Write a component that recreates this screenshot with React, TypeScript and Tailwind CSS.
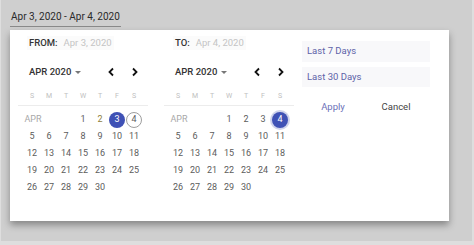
import React from "react";

const font = { fontFamily: "Roboto, 'Liberation Sans', sans-serif" };

function Chevron({ dir }: { dir: "l" | "r" }) {
  return (
    <svg width="8" height="10" viewBox="0 0 8 10">
      {dir === "l" ? (
        <polyline points="6,1.5 2.5,5 6,8.5" fill="none" stroke="#111" strokeWidth="1.8" />
      ) : (
        <polyline points="2,1.5 5.5,5 2,8.5" fill="none" stroke="#111" strokeWidth="1.8" />
      )}
    </svg>
  );
}

type DayState = "none" | "sel" | "outline" | "today" | "selHalo";

function Calendar({
  label,
  value,
  states,
}: {
  label: string;
  value: string;
  states: Record<number, DayState>;
}) {
  const cells: (number | null)[] = [null, null, null];
  for (let d = 1; d <= 30; d++) cells.push(d);
  return (
    <div className="w-[130px] flex flex-col">
      <div className="h-[14px] mt-[6px] flex items-center">
        <div className="ml-[9px] px-[2px] h-[14px] flex items-center bg-[#fbfbfb] whitespace-nowrap">
          <span className="text-[9.5px] font-medium text-[#333]">{label}</span>
          <span className="text-[9.5px] text-[#c4c4c4] ml-[6px]">{value}</span>
        </div>
      </div>
      <div className="h-[14px] mt-[15px] flex items-center pl-[11px]">
        <span className="text-[9.5px] font-medium text-[#333]">APR 2020</span>
        <span className="ml-[4px] w-0 h-0 border-l-[3px] border-r-[3px] border-t-[3px] border-l-transparent border-r-transparent border-t-[#777]" />
        <div className="ml-[26px] flex items-center">
          <Chevron dir="l" />
          <span className="w-[16px]" />
          <Chevron dir="r" />
        </div>
      </div>
      <div className="mt-[12px] pl-[5.5px] grid grid-cols-[repeat(7,17px)] h-[10px] items-center">
        {["S", "M", "T", "W", "T", "F", "S"].map((d, i) => (
          <span key={i} className="text-[7px] text-[#c0c0c0] text-center">
            {d}
          </span>
        ))}
      </div>
      <div className="mt-[4px] border-t border-[#ececec]" />
      <div className="mt-[5px] pl-[5.5px] grid grid-cols-[repeat(7,17px)] auto-rows-[17px]">
        {cells.map((d, i) => {
          if (i === 0)
            return (
              <span key={i} className="col-span-3 text-[9px] text-[#a8a8a8] flex items-center pl-[1px]">
                APR
              </span>
            );
          if (i < 3) return null;
          const st = states[d as number] ?? "none";
          let cls = "text-[#5c5c5c]";
          let inner = "";
          if (st === "sel") inner = "bg-[#3f51b5] text-white";
          if (st === "selHalo") inner = "bg-[#3f51b5] text-white shadow-[0_0_0_2px_rgba(63,81,181,0.25)]";
          if (st === "outline") inner = "border border-[#9e9e9e] text-[#5c5c5c]";
          if (st === "today") cls = "text-[#8f8040]";
          return (
            <span key={i} className={`flex items-center justify-center text-[9px] ${cls}`}>
              <span className={`w-[16px] h-[16px] rounded-full flex items-center justify-center ${inner}`}>{d}</span>
            </span>
          );
        })}
      </div>
    </div>
  );
}

export default function App() {
  return (
    <div className="w-[474px] h-[245px] bg-[#dedede] overflow-hidden" style={font}>
      <div className="w-[471px] h-[241px] bg-[#cfcfcf] ml-[1px]">
        <div className="h-[30px] pl-[9px] pt-[10px]">
          <div className="w-[111px] h-[17px] border-b border-[#8a8a8a] whitespace-nowrap pl-[1px]">
            <span className="block text-[10px] leading-[14px] text-[#2a2a2a]">Apr 3, 2020 - Apr 4, 2020</span>
          </div>
        </div>
        <div className="ml-[9px] w-[439px] h-[191px] bg-white shadow-[0_4px_7px_rgba(0,0,0,0.35)] flex">
          <div className="ml-[8px]">
            <Calendar label="FROM:" value="Apr 3, 2020" states={{ 2: "today", 3: "sel", 4: "outline" }} />
          </div>
          <div className="ml-[16px]">
            <Calendar label="TO:" value="Apr 4, 2020" states={{ 4: "selHalo" }} />
          </div>
          <div className="ml-[8px] w-[128px] pt-[11px] flex flex-col">
            <div className="h-[21px] bg-[#f8f8fa] flex items-center pl-[5px]">
              <span className="text-[9.5px] text-[#5d63a8]">Last 7 Days</span>
            </div>
            <div className="mt-[5px] h-[20px] bg-[#f8f8fa] flex items-center pl-[5px]">
              <span className="text-[9.5px] text-[#5d63a8]">Last 30 Days</span>
            </div>
            <div className="mt-[12px] flex h-[16px] items-center">
              <span className="w-[62px] text-center text-[9.5px] text-[#6b70b8]">Apply</span>
              <span className="w-[64px] text-center text-[9.5px] text-[#444]">Cancel</span>
            </div>
          </div>
        </div>
      </div>
    </div>
  );
}
